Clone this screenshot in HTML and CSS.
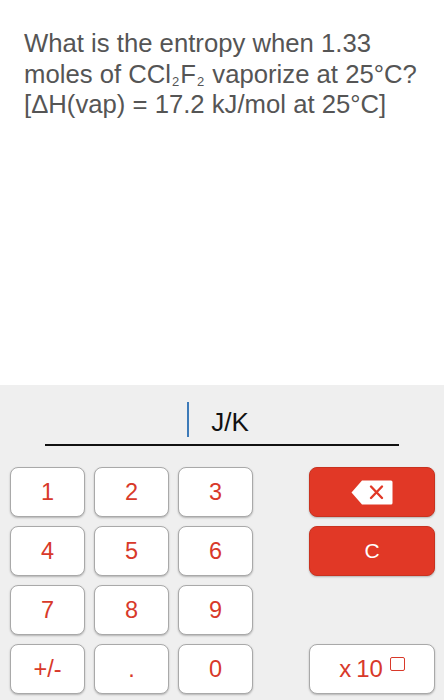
FILE: index.html
```html
<!DOCTYPE html>
<html>
<head>
<meta charset="utf-8">
<link rel="stylesheet" href="styles.css">
</head>
<body>
<div class="question">
  <p>What is the entropy when 1.33 moles of CCl<sub>2</sub>F<sub>2</sub> vaporize at 25°C? [ΔH(vap) = 17.2 kJ/mol at 25°C]</p>
</div>
<div class="pad">
  <div class="field">
    <span class="cursor"></span>
    <span class="unit">J/K</span>
  </div>
  <div class="keys">
    <button class="key">1</button>
    <button class="key">2</button>
    <button class="key">3</button>
    <button class="key red del"><svg width="42" height="25" viewBox="0 0 42 25"><path d="M11 0.5 H40 Q41.5 0.5 41.5 2 V23 Q41.5 24.5 40 24.5 H11 L0.5 12.5 Z" fill="#fff"/><path d="M20 6.5 L31 18 M31 6.5 L20 18" stroke="#e13826" stroke-width="2.4" stroke-linecap="round"/></svg></button>
    <button class="key">4</button>
    <button class="key">5</button>
    <button class="key">6</button>
    <button class="key red clear">C</button>
    <button class="key">7</button>
    <button class="key">8</button>
    <button class="key">9</button>
    <span class="blank"></span>
    <button class="key">+/-</button>
    <button class="key">.</button>
    <button class="key">0</button>
    <button class="key exp">x<span class="ten">10</span><span class="box"></span></button>
  </div>
</div>
</body>
</html>
```
FILE: styles.css
```css
html, body {
  margin: 0;
  padding: 0;
  background: #fff;
  font-family: "Liberation Sans", Arial, sans-serif;
}
body {
  width: 444px;
  height: 700px;
  display: flex;
  flex-direction: column;
}
.question {
  height: 385px;
  padding: 28px 14px 0 24px;
  box-sizing: border-box;
}
.question p {
  margin: 0;
  font-size: 25.7px;
  line-height: 30.5px;
  color: #555;
}
.question sub {
  font-size: 13px;
  vertical-align: -3px;
  line-height: 0;
  margin: 0 1px;
}
.pad {
  flex: 1;
  background: #efefef;
  display: flex;
  flex-direction: column;
}
.field {
  margin: 17px 45px 0 45px;
  height: 42px;
  border-bottom: 2px solid #111;
  display: flex;
  justify-content: center;
  align-items: flex-start;
  gap: 22px;
}
.cursor {
  width: 2px;
  height: 35px;
  background: #3d7ab8;
  margin-left: -8px;
}
.unit {
  font-size: 26px;
  color: #111;
  line-height: 34px;
  padding-top: 3px;
}
.keys {
  margin-top: 21px;
  padding: 0 9px 0 10px;
  display: grid;
  grid-template-columns: 75px 75px 75px 126px;
  grid-auto-rows: 50px;
  column-gap: 9px;
  row-gap: 9px;
}
.keys .key:nth-child(4n) {
  margin-left: 47px;
}
.keys .blank:nth-child(4n) {
  margin-left: 47px;
}
.key {
  border: 1px solid #a9a9a9;
  border-radius: 8px;
  background: #fff;
  box-shadow: 0 1px 2px rgba(0,0,0,0.25);
  color: #d8392a;
  font-family: "Liberation Sans", Arial, sans-serif;
  font-size: 23.5px;
  padding: 0;
  display: flex;
  align-items: center;
  justify-content: center;
}
.key.red {
  background: #e13826;
  border-color: #c9321f;
  color: #fff;
}
.key.clear {
  font-size: 21px;
}
.keys .key.red, .keys .key.exp {
  width: 126px;
}
.key.del {
  padding-top: 1px;
}
.exp {
  font-size: 24px;
  gap: 0;
}
.exp .ten {
  margin-left: 5px;
}
.exp .box {
  width: 15px;
  height: 14px;
  border: 1.5px solid #d8392a;
  border-radius: 2px;
  margin-left: 7px;
  margin-top: -10px;
  box-sizing: border-box;
}
```
